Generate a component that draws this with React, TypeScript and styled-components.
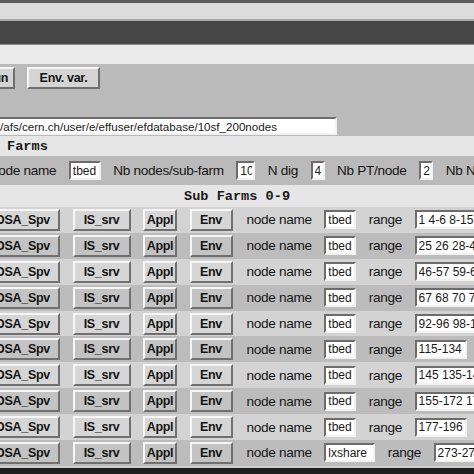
import React from "react";
import styled, { createGlobalStyle } from "styled-components";

const GlobalStyle = createGlobalStyle`
  html, body {
    margin: 0;
    padding: 0;
    background: #1e1e1e;
  }
  body {
    font-family: "Liberation Sans", Arial, sans-serif;
  }
`;

const Screen = styled.div`
  width: 474px;
  height: 474px;
  overflow: hidden;
  display: flex;
  flex-direction: column;
  background: #1e1e1e;
`;

const TopEdge = styled.div`
  height: 3px;
  background: #5c5c5c;
  flex: none;
`;

const TitleBar = styled.div`
  height: 16px;
  background: #dcdcdc;
  border-bottom: 2px solid #a9a9a9;
  flex: none;
`;

const MenuBand = styled.div`
  height: 23px;
  background: #474747;
  border-bottom: 1px solid #8a8a8a;
  flex: none;
`;

const LightBand = styled.div`
  height: 19px;
  background: #ececec;
  flex: none;
`;

const Toolbar = styled.div`
  height: 53px;
  background: #bababa;
  display: flex;
  align-items: flex-start;
  gap: 12px;
  padding-top: 3px;
  box-sizing: border-box;
  margin-left: -22px;
  flex: none;
`;

const Button = styled.button<{ $w: number; $shade?: string }>`
  width: ${({ $w }) => $w}px;
  height: 22px;
  flex: none;
  box-sizing: border-box;
  padding: 0;
  margin: 0;
  background: ${({ $shade }) => $shade || "#d4d4d4"};
  border: 2px solid;
  border-color: #f6f6f6 #707070 #707070 #f6f6f6;
  font-family: "Liberation Sans", Arial, sans-serif;
  font-weight: bold;
  font-size: 12.5px;
  letter-spacing: -0.3px;
  color: #141414;
  text-align: center;
  line-height: 18px;
  white-space: nowrap;
  overflow: hidden;
`;

const PathRow = styled.div`
  height: 19px;
  background: #bababa;
  display: flex;
  align-items: stretch;
  flex: none;
`;

const Field = styled.input<{ $w: number }>`
  width: ${({ $w }) => $w}px;
  height: 19px;
  flex: none;
  box-sizing: border-box;
  margin: 0;
  padding: 0 1px 0 2px;
  background: #ffffff;
  border: 2px solid;
  border-color: #6c6c6c #f2f2f2 #f2f2f2 #6c6c6c;
  font-family: "Liberation Sans", Arial, sans-serif;
  font-size: 12px;
  line-height: normal;
  color: #1a1a1a;
  outline: none;
`;

const PathField = styled(Field)`
  height: 18px;
  margin-left: -4px;
  padding: 0 0 0 2px;
  font-size: 11.6px;
`;

const SectionHeader = styled.div<{ $h: number; $indent: number }>`
  height: ${({ $h }) => $h}px;
  background: #e6e6e6;
  display: flex;
  align-items: center;
  padding-left: ${({ $indent }) => $indent}px;
  font-family: "Liberation Mono", "Courier New", monospace;
  font-weight: bold;
  font-size: 13.6px;
  color: #1a1a1a;
  white-space: nowrap;
  flex: none;
`;

const ParamRow = styled.div`
  height: 29px;
  background: #bababa;
  display: flex;
  align-items: center;
  gap: 12.5px;
  margin-left: -9px;
  flex: none;
`;

const Label = styled.span<{ $lead?: number }>`
  margin-left: ${({ $lead }) => $lead || 0}px;
  font-family: "Liberation Sans", Arial, sans-serif;
  font-size: 13.6px;
  letter-spacing: -0.3px;
  color: #161616;
  white-space: nowrap;
  flex: none;
`;

const FarmRow = styled.div<{ $dark: boolean }>`
  height: 25.9px;
  background: ${({ $dark }) => ($dark ? "#bcbcbc" : "#d3d3d3")};
  display: flex;
  align-items: center;
  gap: 12.5px;
  margin-left: -15px;
  flex: none;
`;

const BottomEdge = styled.div`
  height: 2px;
  background: #cfcfcf;
  flex: none;
`;

const farms = [
  { node: "tbed", range: "1 4-6 8-15 17-22 24" },
  { node: "tbed", range: "25 26 28-43 45" },
  { node: "tbed", range: "46-57 59-65 66" },
  { node: "tbed", range: "67 68 70 71-90" },
  { node: "tbed", range: "92-96 98-113" },
  { node: "tbed", range: "115-134", rw: 52 },
  { node: "tbed", range: "145 135-144" },
  { node: "tbed", range: "155-172 174-175" },
  { node: "tbed", range: "177-196", rw: 52 },
  { node: "lxshare", range: "273-277 279", nw: 51 },
];

export default function App() {
  return (
    <>
      <GlobalStyle />
      <Screen>
        <TopEdge />
        <TitleBar />
        <MenuBand />
        <LightBand />
        <Toolbar>
          <Button $w={37}>Run</Button>
          <Button $w={73}>Env. var.</Button>
        </Toolbar>
        <PathRow>
          <PathField
            $w={341}
            readOnly
            value="/afs/cern.ch/user/e/effuser/efdatabase/10sf_200nodes"
          />
        </PathRow>
        <SectionHeader $h={20} $indent={7}>
          Farms
        </SectionHeader>
        <ParamRow>
          <Label>node name</Label>
          <Field $w={32} readOnly value="tbed" />
          <Label>Nb nodes/sub-farm</Label>
          <Field $w={19} readOnly value="10" />
          <Label>N dig</Label>
          <Field $w={14} readOnly value="4" />
          <Label>Nb PT/node</Label>
          <Field $w={14} readOnly value="2" />
          <Label>Nb Nodes</Label>
        </ParamRow>
        <SectionHeader $h={22} $indent={184}>
          Sub Farms 0-9
        </SectionHeader>
        {farms.map((f, i) => {
          const dark = i % 2 === 1;
          const shade = dark ? "#c3c3c3" : "#d6d6d6";
          return (
            <FarmRow key={i} $dark={dark}>
              <Button $w={75} $shade={shade}>
                OSA_Spv
              </Button>
              <Button $w={58} $shade={shade}>
                IS_srv
              </Button>
              <Button $w={34} $shade={shade}>
                Appl
              </Button>
              <Button $w={43} $shade={shade}>
                Env
              </Button>
              <Label $lead={1.5}>node name</Label>
              <Field $w={f.nw || 32} readOnly value={f.node} />
              <Label>range</Label>
              <Field $w={f.rw || 140} readOnly value={f.range} />
            </FarmRow>
          );
        })}
        <BottomEdge />
      </Screen>
    </>
  );
}
